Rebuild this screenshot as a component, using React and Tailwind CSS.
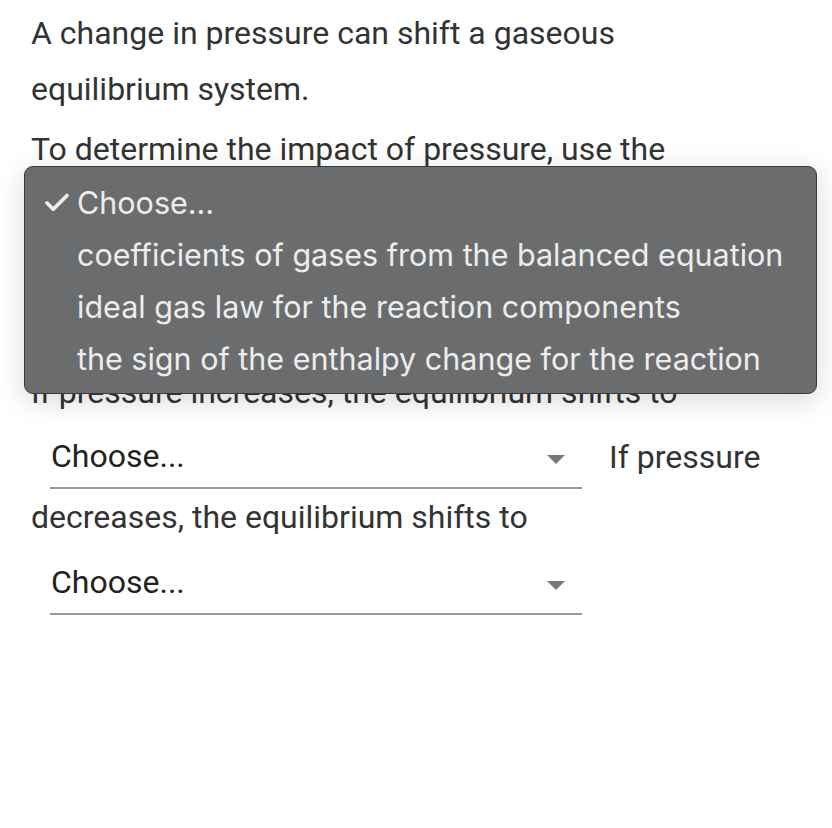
import { Check } from 'lucide-react';

const SelectBox = ({ className = '' }) => (
  <div className={`relative flex items-center w-[532px] h-[65px] border-b-2 border-[#9a9a9a] text-[#222] ${className}`}>
    <span className="pl-px">Choose...</span>
    <span className="absolute right-[17px] top-1/2 mt-[-1px] w-0 h-0 border-l-[9px] border-r-[9px] border-t-[9px] border-l-transparent border-r-transparent border-t-[#777]" />
  </div>
);

const options = [
  'coefficients of gases from the balanced equation',
  'ideal gas law for the reaction components',
  'the sign of the enthalpy change for the reaction',
];

export default function App() {
  return (
    <div className="relative min-h-[828px] bg-white pl-[31px] pt-[5px] font-['Roboto','Liberation_Sans',sans-serif] text-[32px] leading-[56px] text-[#333]">
      <p>
        A change in pressure can shift a gaseous
        <br />
        equilibrium system.
      </p>

      <div className="mt-[4px]">
        <div>To determine the impact of pressure, use the</div>
        {/* first select sits under the open menu */}
        <div className="flex items-start h-[187px] pt-[4px]">
          <SelectBox className="ml-[19px]" />
          <span>.</span>
        </div>
        <div>If pressure increases, the equilibrium shifts to</div>
        <div className="flex items-center pt-[4px]">
          <SelectBox className="ml-[19px]" />
          <span className="ml-[27px]">If pressure</span>
        </div>
        <div>decreases, the equilibrium shifts to</div>
        <div className="flex items-center pt-[5px]">
          <SelectBox className="ml-[19px]" />
        </div>
      </div>

      {/* open native-style option menu */}
      <div className="absolute left-[24px] top-[166px] w-[793px] h-[228px] rounded-[9px] border border-[#3b3b3b] bg-[#6b6c6e] pt-[10px] font-['Inter','Roboto',sans-serif] text-[30.5px] leading-[52px] text-[#ececec] shadow-[0_6px_28px_rgba(0,0,0,0.16)]">
        <div className="flex items-center">
          <Check className="ml-[17px] w-[30px] h-[30px]" strokeWidth={3} />
          <span className="ml-[5px]">Choose...</span>
        </div>
        {options.map((o) => (
          <div key={o} className="pl-[52px]">{o}</div>
        ))}
      </div>
    </div>
  );
}
